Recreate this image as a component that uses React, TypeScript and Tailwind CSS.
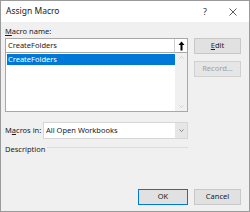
const font = "font-['Segoe_UI','Noto_Sans','Open_Sans',sans-serif]";

function Button({
  label,
  mnemonic,
  rest,
  disabled,
  primary,
}: {
  label?: string;
  mnemonic?: string;
  rest?: string;
  disabled?: boolean;
  primary?: boolean;
}) {
  return (
    <div
      className={
        "flex h-[16px] items-center justify-center border text-[7.5px] whitespace-nowrap " +
        (primary
          ? "border-[#0078d7] bg-[#e1e1e1] text-[#1a1a1a]"
          : disabled
            ? "border-[#d0d0d0] bg-[#e6e6e6] text-[#a0a0a0]"
            : "border-[#c8c8c8] bg-[#e1e1e1] text-[#1a1a1a]")
      }
    >
      {mnemonic ? <span className="underline">{mnemonic}</span> : null}
      {rest}
      {label}
    </div>
  );
}

export default function App() {
  return (
    <div
      className={`flex h-[212px] w-[250px] flex-col border border-[#9a9a9a] bg-[#f0f0f0] text-[#1a1a1a] ${font}`}
    >
      {/* title bar */}
      <div className="flex h-[21px] items-center bg-white pl-[5px]">
        <span className="text-[8.5px]">Assign Macro</span>
        <span className="ml-auto mr-[22px] text-[9px] text-[#333]">?</span>
        <svg width="8" height="8" viewBox="0 0 8 8" className="mr-[12px]">
          <path d="M0.5 0.5L7.5 7.5M7.5 0.5L0.5 7.5" stroke="#333" strokeWidth="0.8" />
        </svg>
      </div>

      <div className="flex flex-1 flex-col pl-[4px] pr-[8px] pb-[6px]">
        <div className="flex gap-[6px]">
          {/* left column */}
          <div className="flex w-[183px] flex-col">
            <div className="mt-[3px] h-[13px] text-[7.5px] leading-[13px]">
              <span className="underline">M</span>acro name:
            </div>
            <div className="flex h-[15px] border border-[#a8a8a8] bg-white">
              <span className="flex-1 pl-[2px] text-[7.5px] leading-[13px]">CreateFolders</span>
              <div className="flex w-[13px] items-center justify-center border-l border-[#d0d0d0] bg-white">
                <svg width="7" height="10" viewBox="0 0 7 10">
                  <path d="M3.5 0.5L0.5 4H2.5V9.5H4.5V4H6.5Z" fill="#000" />
                </svg>
              </div>
            </div>
            <div className="flex h-[59px] border border-t-0 border-[#a8a8a8] bg-white">
              <div className="flex-1 pl-[1px] pt-[1px]">
                <div className="h-[11px] bg-[#0078d7] pl-[1px] text-[7.5px] leading-[11px] text-white">
                  CreateFolders
                </div>
              </div>
              <div className="flex w-[12px] flex-col items-center justify-between bg-[#f0f0f0] py-[3px]">
                <svg width="5" height="3" viewBox="0 0 5 3">
                  <path d="M0.5 2.5L2.5 0.5L4.5 2.5" stroke="#c2c2c2" strokeWidth="0.7" fill="none" />
                </svg>
                <svg width="5" height="3" viewBox="0 0 5 3">
                  <path d="M0.5 0.5L2.5 2.5L4.5 0.5" stroke="#c2c2c2" strokeWidth="0.7" fill="none" />
                </svg>
              </div>
            </div>

            <div className="mt-[10px] flex h-[17px] items-center">
              <span className="w-[38px] shrink-0 whitespace-nowrap text-[7.5px]">
                M<span className="underline">a</span>cros in:
              </span>
              <div className="flex h-full flex-1 border border-[#d6d6d6] bg-white">
                <span className="flex-1 pl-[2px] text-[7.5px] leading-[15px]">All Open Workbooks</span>
                <div className="flex w-[12px] items-center justify-center bg-[#e6e6e6]">
                  <svg width="5" height="3" viewBox="0 0 5 3">
                    <path d="M0.5 0.5L2.5 2.5L4.5 0.5" stroke="#606060" strokeWidth="0.7" fill="none" />
                  </svg>
                </div>
              </div>
            </div>

            <div className="mt-[4px] flex items-center gap-[2px]">
              <span className="whitespace-nowrap text-[7.5px] leading-[12px]">Description</span>
              <div className="mb-[3px] h-px flex-1 bg-[#dcdcdc]" />
            </div>
          </div>

          {/* right column */}
          <div className="flex w-[47px] flex-col gap-[7px] pt-[16px]">
            <Button mnemonic="E" rest="dit" />
            <Button label="Record..." disabled />
          </div>
        </div>

        <div className="mt-auto flex justify-end gap-[6px]">
          <div className="w-[50px]">
            <Button label="OK" primary />
          </div>
          <div className="w-[47px]">
            <Button label="Cancel" />
          </div>
        </div>
      </div>
    </div>
  );
}
